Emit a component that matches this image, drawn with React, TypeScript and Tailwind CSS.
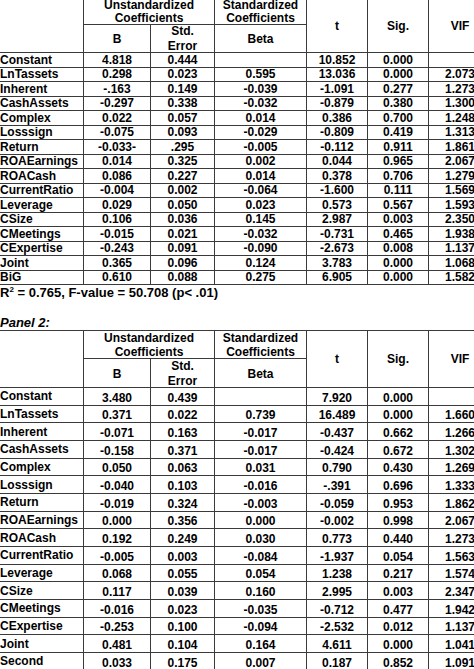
import React from "react";

type Row = [string, string, string, string, string, string, string];

const panel1: Row[] = [
  ["Constant", "4.818", "0.444", "", "10.852", "0.000", ""],
  ["LnTassets", "0.298", "0.023", "0.595", "13.036", "0.000", "2.073"],
  ["Inherent", "-.163", "0.149", "-0.039", "-1.091", "0.277", "1.273"],
  ["CashAssets", "-0.297", "0.338", "-0.032", "-0.879", "0.380", "1.300"],
  ["Complex", "0.022", "0.057", "0.014", "0.386", "0.700", "1.248"],
  ["Losssign", "-0.075", "0.093", "-0.029", "-0.809", "0.419", "1.313"],
  ["Return", "-0.033-", ".295", "-0.005", "-0.112", "0.911", "1.861"],
  ["ROAEarnings", "0.014", "0.325", "0.002", "0.044", "0.965", "2.067"],
  ["ROACash", "0.086", "0.227", "0.014", "0.378", "0.706", "1.279"],
  ["CurrentRatio", "-0.004", "0.002", "-0.064", "-1.600", "0.111", "1.569"],
  ["Leverage", "0.029", "0.050", "0.023", "0.573", "0.567", "1.593"],
  ["CSize", "0.106", "0.036", "0.145", "2.987", "0.003", "2.350"],
  ["CMeetings", "-0.015", "0.021", "-0.032", "-0.731", "0.465", "1.938"],
  ["CExpertise", "-0.243", "0.091", "-0.090", "-2.673", "0.008", "1.137"],
  ["Joint", "0.365", "0.096", "0.124", "3.783", "0.000", "1.068"],
  ["BiG", "0.610", "0.088", "0.275", "6.905", "0.000", "1.582"],
];

const panel2: Row[] = [
  ["Constant", "3.480", "0.439", "", "7.920", "0.000", ""],
  ["LnTassets", "0.371", "0.022", "0.739", "16.489", "0.000", "1.660"],
  ["Inherent", "-0.071", "0.163", "-0.017", "-0.437", "0.662", "1.266"],
  ["CashAssets", "-0.158", "0.371", "-0.017", "-0.424", "0.672", "1.302"],
  ["Complex", "0.050", "0.063", "0.031", "0.790", "0.430", "1.269"],
  ["Losssign", "-0.040", "0.103", "-0.016", "-.391", "0.696", "1.333"],
  ["Return", "-0.019", "0.324", "-0.003", "-0.059", "0.953", "1.862"],
  ["ROAEarnings", "0.000", "0.356", "0.000", "-0.002", "0.998", "2.067"],
  ["ROACash", "0.192", "0.249", "0.030", "0.773", "0.440", "1.273"],
  ["CurrentRatio", "-0.005", "0.003", "-0.084", "-1.937", "0.054", "1.563"],
  ["Leverage", "0.068", "0.055", "0.054", "1.238", "0.217", "1.574"],
  ["CSize", "0.117", "0.039", "0.160", "2.995", "0.003", "2.347"],
  ["CMeetings", "-0.016", "0.023", "-0.035", "-0.712", "0.477", "1.942"],
  ["CExpertise", "-0.253", "0.100", "-0.094", "-2.532", "0.012", "1.137"],
  ["Joint", "0.481", "0.104", "0.164", "4.611", "0.000", "1.041"],
  ["Second", "0.033", "0.175", "0.007", "0.187", "0.852", "1.091"],
];

function Panel({
  rows,
  first,
}: {
  rows: Row[];
  first: boolean;
}) {
  const gridRows = first
    ? "grid-rows-[26px_27px_repeat(16,13.5px)]"
    : "grid-rows-[27px_28px_repeat(16,16.67px)]";
  const numPad = first ? "" : "pt-[3px]";
  const spanPad = first ? "pt-[2px]" : "";
  const topCls = first ? "pt-[2px] leading-[13px]" : "leading-[14px]";
  return (
    <div
      className={`grid w-[491px] grid-cols-[83px_66px_63px_91px_60px_60px_62px] gap-px bg-[#3a3a3a] pt-px pb-px ${gridRows}`}
    >
      <div className="row-span-2 bg-white" />
      <div className={`col-span-2 flex items-center justify-center bg-white text-center ${topCls}`}>
        Unstandardized
        <br />
        Coefficients
      </div>
      <div className={`flex items-center justify-center bg-white text-center ${topCls}`}>
        Standardized
        <br />
        Coefficients
      </div>
      <div className={`row-span-2 flex items-center justify-center bg-white ${spanPad}`}>t</div>
      <div className={`row-span-2 flex items-center justify-center bg-white ${spanPad}`}>Sig.</div>
      <div className={`row-span-2 flex items-center justify-center bg-white ${spanPad}`}>VIF</div>
      <div className="flex items-center justify-center bg-white pt-px">B</div>
      <div className="flex items-center justify-center bg-white pt-px text-center leading-[15px]">
        Std.
        <br />
        Error
      </div>
      <div className="flex items-center justify-center bg-white pt-px">Beta</div>
      {rows.map((r) => (
        <React.Fragment key={r[0]}>
          <div className="flex items-center overflow-hidden whitespace-nowrap bg-white leading-none">
            {r[0]}
          </div>
          {r.slice(1).map((v, i) => (
            <div
              key={i}
              className={`flex items-center justify-center overflow-hidden whitespace-nowrap bg-white leading-none ${numPad}`}
            >
              {v}
            </div>
          ))}
        </React.Fragment>
      ))}
    </div>
  );
}

export default function App() {
  return (
    <div className="relative h-[669px] w-[474px] overflow-hidden bg-white font-['Liberation_Sans',Arial,sans-serif] text-[12px] font-bold text-black">
      <div className="-mt-[3px]">
        <Panel rows={panel1} first />
      </div>
      <div className="h-[16px] whitespace-nowrap text-[13px] leading-[16px]">
        R<sup className="relative -top-[5px] align-baseline text-[8px]">2</sup> = 0.765, F-value = 50.708 (p&lt; .01)
      </div>
      <div className="h-[29px] pt-[15px] text-[13px] italic leading-[14px]">Panel 2:</div>
      <Panel rows={panel2} first={false} />
    </div>
  );
}
